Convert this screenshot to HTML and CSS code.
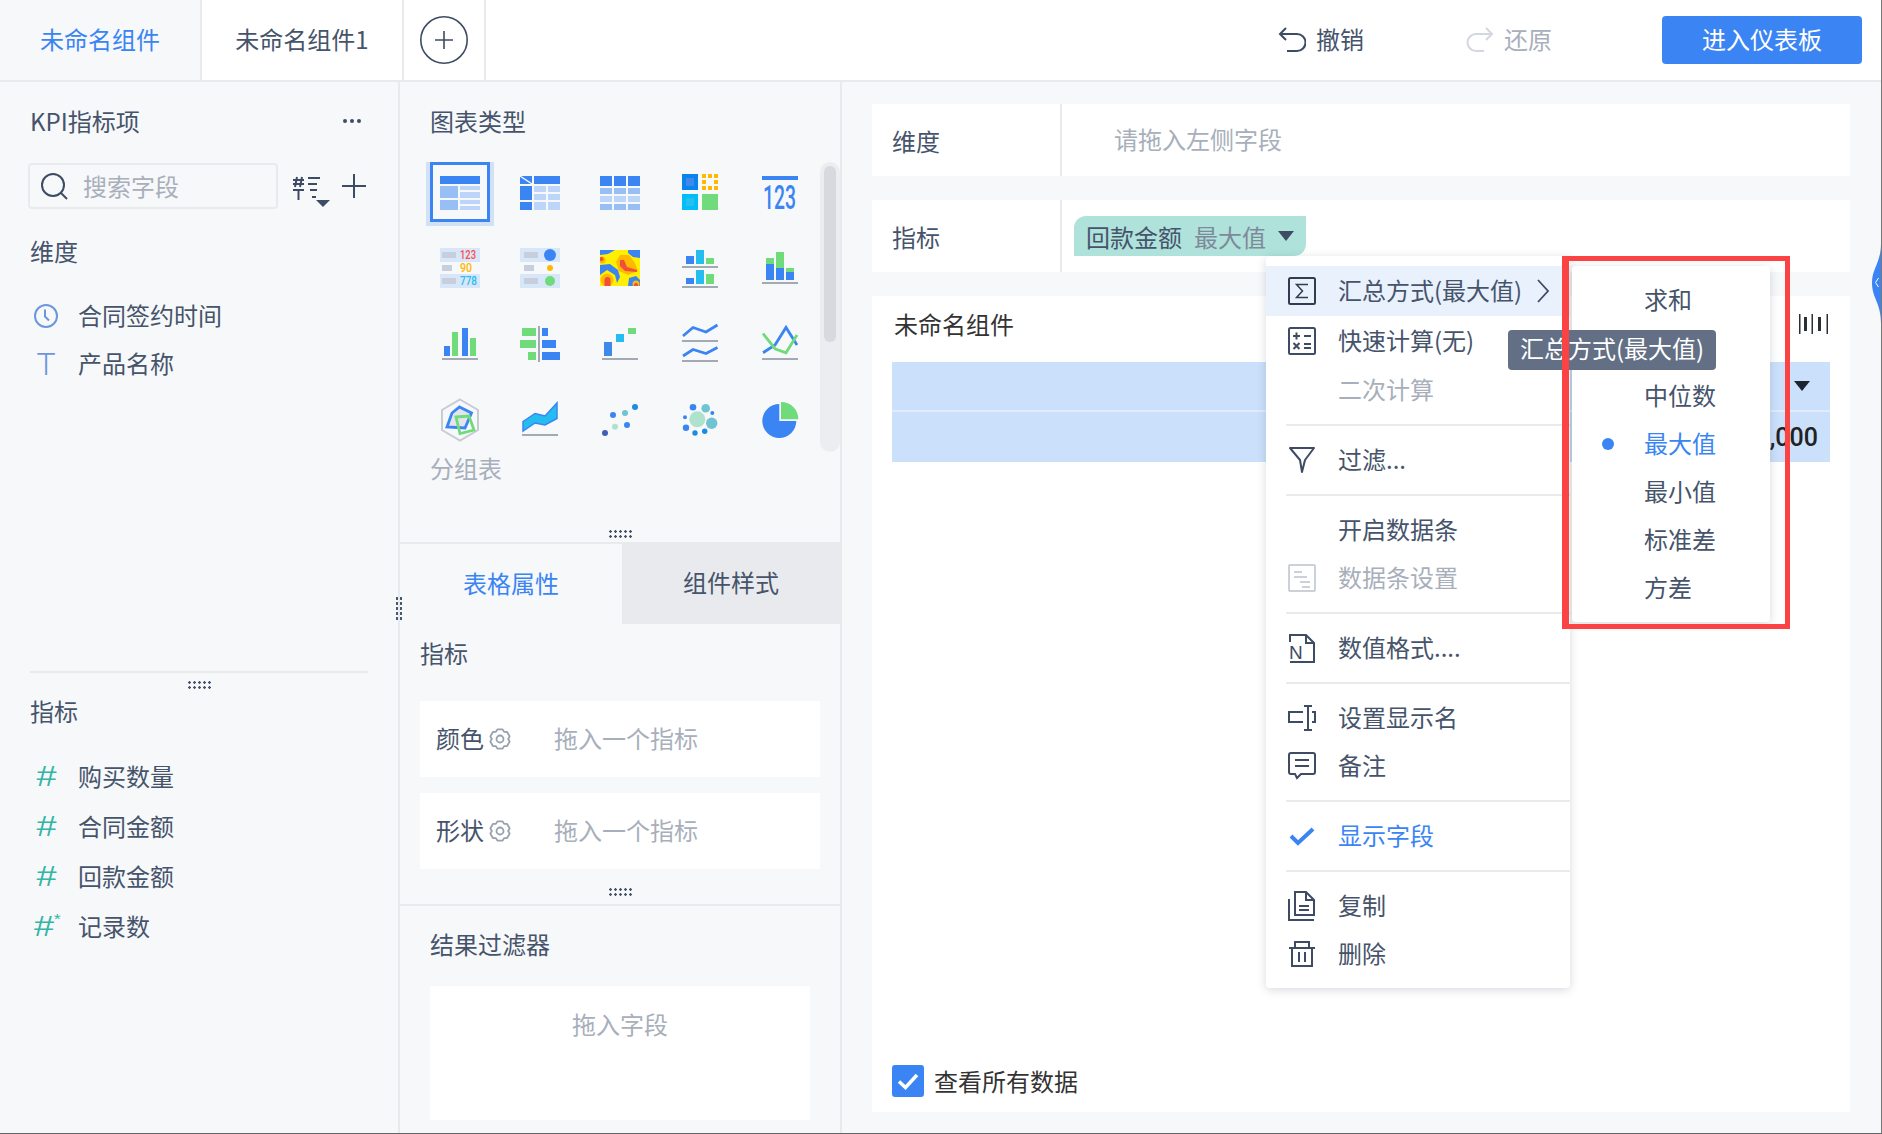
FILE: index.html
```html
<!DOCTYPE html>
<html lang="zh-CN">
<head>
    <meta charset="UTF-8">
    <title>未命名组件</title>
    <link rel="stylesheet" href="styles.css">
</head>
<body>
<div class="app">
    <header class="topbar">
        <div class="tab tab-active">未命名组件</div>
        <div class="tab">未命名组件1</div>
        <div class="tab-add">
            <svg width="48" height="48" viewBox="0 0 48 48" fill="none" stroke="#3d4b63"><circle cx="24" cy="24" r="23.2" stroke-width="1.6"/><path d="M24 15v18M15 24h18" stroke-width="1.6"/></svg>
        </div>
        <div class="top-actions">
            <div class="action">
                <svg width="28" height="26" viewBox="0 0 28 26" fill="none" stroke="#3d4b63" stroke-width="2"><path d="M8 1 2 7l6 6"/><path d="M2 7h17a7.5 7.5 0 0 1 0 17H9"/></svg>
                <span>撤销</span>
            </div>
            <div class="action action-off">
                <svg width="28" height="26" viewBox="0 0 28 26" fill="none" stroke="#d3d7de" stroke-width="2"><path d="M20 1l6 6-6 6"/><path d="M26 7H10a7.5 7.5 0 0 0 0 17h8"/></svg>
                <span>还原</span>
            </div>
            <button class="primary-btn">进入仪表板</button>
        </div>
    </header>

    <div class="workspace">
        <aside class="fields-panel">
            <div class="dim-block">
                <div class="panel-title">
                    <span>KPI指标项</span>
                    <svg class="more" width="20" height="6" viewBox="0 0 20 6" fill="#3d4b63"><circle cx="3" cy="3" r="2"/><circle cx="10" cy="3" r="2"/><circle cx="17" cy="3" r="2"/></svg>
                </div>
                <div class="search-row">
                    <div class="search-box">
                        <svg width="30" height="30" viewBox="0 0 30 30" fill="none" stroke="#3d4b63" stroke-width="2"><circle cx="14" cy="14" r="11"/><path d="M22 22l6 6"/></svg>
                        <span>搜索字段</span>
                    </div>
                    <svg class="sort-icon" width="40" height="34" viewBox="0 0 40 34" fill="none" stroke="#3d4b63" stroke-width="2">
                        <path d="M5 4 3 14M10 4 8 14M1 7h11M1 11h11M1 17h11M6.500 17v10M16 5h12M16 11h9M18 17h7M20 24h4"/>
                        <path d="M24 27h14l-7 7z" fill="#3d4b63" stroke="none"/>
                    </svg>
                    <svg class="plus-icon" width="24" height="24" viewBox="0 0 24 24" stroke="#3d4b63" stroke-width="2"><path d="M12 0v24M0 12h24"/></svg>
                </div>
                <div class="group-title">维度</div>
                <ul class="field-list dim-list">
                    <li>
                        <span class="field-icon"><svg width="28" height="28" viewBox="0 0 28 28" fill="none" stroke="#6d97dc" stroke-width="2"><circle cx="16" cy="14" r="11"/><path d="M15 7.500v7l4 4"/></svg></span>
                        <span class="field-name">合同签约时间</span>
                    </li>
                    <li>
                        <span class="field-icon type-t">T</span>
                        <span class="field-name">产品名称</span>
                    </li>
                </ul>
            </div>
            <div class="measure-block">
                <div class="grip grip-field"></div>
                <div class="group-title">指标</div>
                <ul class="field-list measure-list">
                    <li><span class="field-icon type-num">#</span><span class="field-name">购买数量</span></li>
                    <li><span class="field-icon type-num">#</span><span class="field-name">合同金额</span></li>
                    <li><span class="field-icon type-num">#</span><span class="field-name">回款金额</span></li>
                    <li><span class="field-icon type-num type-calc">#<sup>*</sup></span><span class="field-name">记录数</span></li>
                </ul>
            </div>
            <div class="grip-side"></div>
        </aside>

        <section class="config-panel">
            <div class="chart-section">
                <div class="panel-title">图表类型</div>
                <div class="chart-body">
                    <div class="chart-main">
                        <div class="chart-grid">
                            <svg class="chart-icon" viewBox="0 0 60 60">
                                <rect x="-4" width="68" height="64" fill="#d2e1f5"/>
                                <rect x="1.500" y="1.500" width="57" height="57" fill="#f7f8fa" stroke="#3a85f3" stroke-width="3"/>
                                <rect x="10" y="14" width="40" height="8" fill="#3a85f3"/>
                                <path d="M10 24h18v12H10zM10 38h18v10H10z" fill="#98bff5"/>
                                <path d="M30 24h20v4H30zM30 30h20v6H30zM30 38h20v4H30zM30 44h20v4H30z" fill="#bdd5f9"/>
                            </svg>
                            <svg class="chart-icon" viewBox="0 0 60 60">
                                <path d="M10 14h12v8H10zM24 14h26v8H24zM10 24h12v14H10zM10 40h12v8H10z" fill="#3a85f3"/>
                                <path d="M10 14l12 8" stroke="#f7f8fa" stroke-width="1.500"/>
                                <path d="M24 24h12v6H24zM38 24h12v6H38zM24 32h12v6H24zM38 32h12v6H38zM24 40h12v8H24zM38 40h12v8H38z" fill="#bdd5f9"/>
                            </svg>
                            <svg class="chart-icon" viewBox="0 0 60 60">
                                <path d="M10 14h12v10H10zM24 14h12v10H24zM38 14h12v10H38z" fill="#3a85f3"/>
                                <path d="M10 26h12v6H10zM24 26h12v6H24zM38 26h12v6H38zM10 42h12v6H10zM24 42h12v6H24zM38 42h12v6H38z" fill="#98bff5"/>
                                <path d="M10 34h12v6H10zM24 34h12v6H24zM38 34h12v6H38z" fill="#bdd5f9"/>
                            </svg>
                            <svg class="chart-icon" viewBox="0 0 60 60">
                                <rect x="12" y="12" width="16" height="16" fill="#0a84ec"/>
                                <rect x="16" y="16" width="8" height="8" fill="#3f8ae8"/>
                                <path d="M32 12h4v4h-4zM38 12h4v4h-4zM44 12h4v4h-4zM32 18h4v4h-4zM44 18h4v4h-4zM32 24h4v4h-4zM38 24h4v4h-4zM44 24h4v4h-4z" fill="#ffb900"/>
                                <rect x="12" y="32" width="16" height="16" fill="#00bdf7"/>
                                <rect x="16" y="36" width="8" height="8" fill="#26c0f0"/>
                                <rect x="32" y="32" width="16" height="16" fill="#6fdb7a"/>
                            </svg>
                            <svg class="chart-icon" viewBox="0 0 60 60">
                                <rect x="12" y="14" width="36" height="4" fill="#3a85f3"/>
                                <text class="num-glyph" x="13" y="47" font-size="33" textLength="33" lengthAdjust="spacingAndGlyphs" fill="#3a85f3">123</text>
                            </svg>

                            <svg class="chart-icon" viewBox="0 0 60 60">
                                <path d="M10 10h40v14H10zM10 36h40v14H10z" fill="#d8e6fa"/>
                                <path d="M12 14h14v6H12zM12 27h10v6H12zM12 40h14v6H12z" fill="#c8cfdc"/>
                                <text class="num-glyph" x="30" y="21" font-size="12" textLength="16" lengthAdjust="spacingAndGlyphs" fill="#ff4a4a">123</text>
                                <text class="num-glyph" x="30" y="34" font-size="12" textLength="12" lengthAdjust="spacingAndGlyphs" fill="#ffb900">90</text>
                                <text class="num-glyph" x="30" y="47" font-size="12" textLength="17" lengthAdjust="spacingAndGlyphs" fill="#27bdf0">778</text>
                            </svg>
                            <svg class="chart-icon" viewBox="0 0 60 60">
                                <path d="M10 10h40v14H10zM10 36h40v14H10z" fill="#d8e6fa"/>
                                <path d="M14 14h14v6H14zM14 27h10v6H14zM14 40h14v6H14z" fill="#c8cfdc"/>
                                <circle cx="40" cy="17" r="6" fill="#3a85f3"/>
                                <circle cx="40" cy="30" r="3" fill="#ffb900"/>
                                <circle cx="40" cy="43" r="5" fill="#6fdb7a"/>
                            </svg>
                            <svg class="chart-icon" viewBox="0 0 60 60">
                                <svg x="10" y="12" width="40" height="36" viewBox="10 12 40 36">
                                    <rect x="10" y="12" width="40" height="36" fill="#fff000"/>
                                    <path d="M10 12h15l-7 4-8 1zM38 12h12v8l-7-1-5-4zM10 27l10-1 8 6 2 7-3 6-2-8-8-5-7 5zM38 48l1-8 7-2 4 4v6z" fill="#3a85f3"/>
                                    <path d="M26 24l4-7 9 0 6 8 3 8-10 4-9-4z" fill="#ffb900"/>
                                    <path d="M30 22h4l3 7 10 3v2l-12-1-5-5z" fill="#f04f3a"/>
                                    <circle cx="17" cy="42" r="6.500" fill="#ffb900"/>
                                    <circle cx="12" cy="22" r="3.500" fill="#ffb900"/>
                                    <circle cx="46" cy="46" r="3.500" fill="#ffb900"/>
                                    <path d="M14.500 48v-6a3 3 0 0 1 6 0v6z" fill="#f04f3a"/>
                                    <circle cx="11.500" cy="21" r="2" fill="#f04f3a"/>
                                    <circle cx="46" cy="47" r="2" fill="#f04f3a"/>
                                </svg>
                            </svg>
                            <svg class="chart-icon" viewBox="0 0 60 60">
                                <path d="M12 28h36v2H12zM12 48h36v2H12z" fill="#a3aab6"/>
                                <path d="M16 18h8v8h-8zM16 40h8v6h-8z" fill="#3a85f3"/>
                                <path d="M26 12h8v14h-8zM26 32h8v14h-8z" fill="#25bdf0"/>
                                <path d="M36 20h8v6h-8zM36 36h8v10h-8z" fill="#6fdb7a"/>
                            </svg>
                            <svg class="chart-icon" viewBox="0 0 60 60">
                                <path d="M12 44h36v2H12z" fill="#a3aab6"/>
                                <path d="M16 26h8v16h-8zM26 30h8v12h-8zM36 34h8v8h-8z" fill="#3a85f3"/>
                                <path d="M16 20h8v6h-8zM26 14h8v16h-8zM36 30h8v4h-8z" fill="#6fdb7a"/>
                            </svg>

                            <svg class="chart-icon" viewBox="0 0 60 60">
                                <path d="M12 44h36v2H12z" fill="#a3aab6"/>
                                <path d="M14 32h6v10h-6zM32 14h6v28h-6z" fill="#3a85f3"/>
                                <path d="M22 18h6v24h-6zM40 24h6v18h-6z" fill="#6fdb7a"/>
                            </svg>
                            <svg class="chart-icon" viewBox="0 0 60 60">
                                <path d="M28 12h2v36h-2z" fill="#a3aab6"/>
                                <path d="M12 14h14v8H12zM10 26h16v8H10zM18 38h8v8h-8z" fill="#6fdb7a"/>
                                <path d="M32 14h6v8h-6zM32 26h14v8H32zM32 38h18v8H32z" fill="#3a85f3"/>
                            </svg>
                            <svg class="chart-icon" viewBox="0 0 60 60">
                                <path d="M12 44h36v2H12z" fill="#a3aab6"/>
                                <rect x="14" y="28" width="8" height="14" fill="#3f8ae8"/>
                                <rect x="26" y="20" width="8" height="8" fill="#25bdf0"/>
                                <rect x="38" y="14" width="8" height="6" fill="#6fdb7a"/>
                            </svg>
                            <svg class="chart-icon" viewBox="0 0 60 60" fill="none">
                                <path d="M12 27h36M12 47h36" stroke="#a3aab6" stroke-width="2"/>
                                <path d="M13 22l10-8.500 13 4.500 11.500-7M13 42l10-6.500 13 4 11.500-6" stroke="#3a85f3" stroke-width="2.800"/>
                            </svg>
                            <svg class="chart-icon" viewBox="0 0 60 60" fill="none">
                                <path d="M12 45h36" stroke="#a3aab6" stroke-width="2"/>
                                <path d="M13 38.700 25 31l11-17.500L47 31" stroke="#3a85f3" stroke-width="2.800"/>
                                <path d="M13 19.500 25 34.700l11 4L47 21" stroke="#6fdb7a" stroke-width="2.800"/>
                            </svg>

                            <svg class="chart-icon" viewBox="0 0 60 60" fill="none">
                                <path d="M30 9.500 48 20v20L30 50.500 12 40V20z" stroke="#c7ccd4" stroke-width="2"/>
                                <path d="M29.500 17 41.500 23 35 38l-18-1 5-14z" fill="#e3e5ea" stroke="#3a85f3" stroke-width="2.800"/>
                                <path d="M26 27l13-1 5 14-14 3.500z" stroke="#6fdb7a" stroke-width="2.800"/>
                            </svg>
                            <svg class="chart-icon" viewBox="0 0 60 60">
                                <path d="M12 44h36v2H12z" fill="#a3aab6"/>
                                <path d="M13 31.500 25 23.500l10 2.500L47 13v15.500L35 35l-10-2-12 8z" fill="#25bdf0" stroke="#3a85f3" stroke-width="1.500"/>
                            </svg>
                            <svg class="chart-icon" viewBox="0 0 60 60">
                                <circle cx="15" cy="43" r="3" fill="#3f5fb5"/>
                                <circle cx="25" cy="36.700" r="3" fill="#afe2cc"/>
                                <circle cx="23" cy="25" r="3" fill="#3a85f3"/>
                                <circle cx="35" cy="23" r="3" fill="#70c4d2"/>
                                <circle cx="37" cy="35" r="3" fill="#3a85f3"/>
                                <circle cx="45" cy="17" r="3" fill="#1b8ce0"/>
                            </svg>
                            <svg class="chart-icon" viewBox="0 0 60 60">
                                <circle cx="27.300" cy="29.300" r="8" fill="#aee2cd"/>
                                <circle cx="35.700" cy="18.300" r="4.300" fill="#70c4d2"/>
                                <circle cx="41.700" cy="33.300" r="5.700" fill="#70c4d2"/>
                                <circle cx="23" cy="17.300" r="3.300" fill="#3a85f3"/>
                                <circle cx="42.300" cy="23" r="2" fill="#3a85f3"/>
                                <circle cx="15" cy="27.300" r="2" fill="#3a85f3"/>
                                <circle cx="16" cy="37.700" r="3.200" fill="#3a85f3"/>
                                <circle cx="25" cy="43" r="2.700" fill="#1b8ce0"/>
                                <circle cx="34.700" cy="41.300" r="2.700" fill="#1b8ce0"/>
                            </svg>
                            <svg class="chart-icon" viewBox="0 0 60 60">
                                <path d="M29.300 14v17h17a17 17 0 1 1-17-17z" fill="#3a85f3"/>
                                <path d="M31 12a17 17 0 0 1 17.300 17.300H31z" fill="#6fdb7a"/>
                            </svg>
                        </div>
                        <div class="chart-name">分组表</div>
                    </div>
                    <div class="scroll-track"><div class="scroll-thumb"></div></div>
                </div>
                <div class="grip grip-chart"></div>
            </div>

            <div class="prop-tabs">
                <div class="prop-tab prop-tab-active">表格属性</div>
                <div class="prop-tab prop-tab-off">组件样式</div>
            </div>
            <div class="prop-title">指标</div>
            <div class="prop-row">
                <span class="prop-label">颜色</span>
                <svg class="gear" width="22" height="22" viewBox="0 0 22 22" fill="none" stroke="#97a0ae" stroke-width="1.800" stroke-linejoin="round"><path d="M20.660 13.590 18.070 18.070 15.100 18.100 13.590 20.660H8.410L6.900 18.100 3.930 18.070 1.340 13.590 2.800 11 1.340 8.410 3.930 3.930 6.900 3.900 8.410 1.340H13.590L15.100 3.900 18.070 3.930 20.660 8.410 19.200 11z"/><circle cx="11" cy="11" r="3.500"/></svg>
                <span class="placeholder">拖入一个指标</span>
            </div>
            <div class="prop-row">
                <span class="prop-label">形状</span>
                <svg class="gear" width="22" height="22" viewBox="0 0 22 22" fill="none" stroke="#97a0ae" stroke-width="1.800" stroke-linejoin="round"><path d="M20.660 13.590 18.070 18.070 15.100 18.100 13.590 20.660H8.410L6.900 18.100 3.930 18.070 1.340 13.590 2.800 11 1.340 8.410 3.930 3.930 6.900 3.900 8.410 1.340H13.590L15.100 3.900 18.070 3.930 20.660 8.410 19.200 11z"/><circle cx="11" cy="11" r="3.500"/></svg>
                <span class="placeholder">拖入一个指标</span>
            </div>
            <div class="grip grip-prop"></div>
            <div class="filter-section">
                <div class="panel-title filter-title">结果过滤器</div>
                <div class="filter-drop">拖入字段</div>
            </div>
        </section>

        <main class="canvas">
            <div class="shelf">
                <div class="shelf-label">维度</div>
                <div class="shelf-body"><span class="placeholder shelf-hint">请拖入左侧字段</span></div>
            </div>
            <div class="shelf">
                <div class="shelf-label">指标</div>
                <div class="shelf-body">
                    <div class="chip">
                        <span>回款金额</span>
                        <span class="chip-agg">最大值</span>
                        <i class="caret"></i>
                    </div>
                </div>
            </div>
            <div class="card">
                <div class="card-head">
                    <span>未命名组件</span>
                    <svg width="30" height="20" viewBox="0 0 30 20" fill="#2b2f36"><path d="M0 0h1.500v20H0zM5 3h3v14H5zM12.500 0H14v20h-1.500zM19 3h3v14h-3zM27.500 0H29v20h-1.500z"/></svg>
                </div>
                <div class="kpi-table">
                    <div class="kpi-head"><i class="caret caret-dark"></i></div>
                    <div class="kpi-row">,000</div>
                </div>
                <label class="check-all">
                    <svg width="32" height="32" viewBox="0 0 32 32"><rect width="32" height="32" rx="3" fill="#3a85f3"/><path d="M7 16.500l6.500 6L25 10" fill="none" stroke="#fff" stroke-width="3.500"/></svg>
                    查看所有数据
                </label>
            </div>
        </main>
    </div>

    <!-- field context menu -->
    <div class="menu">
        <div class="menu-item menu-item-tall menu-item-hover">
            <svg viewBox="0 0 28 28" fill="none" stroke="#2f3c52" stroke-width="2"><rect x="1" y="1" width="26" height="26" rx="1.500"/><path d="M20 7.500H8.500L14.500 14l-6 6.500H20" stroke-width="1.500"/></svg>
            <span>汇总方式(最大值)</span>
            <svg class="menu-arrow" viewBox="0 0 12 24" fill="none" stroke="#3d4b63" stroke-width="1.800"><path d="M1 1l10 11L1 23"/></svg>
        </div>
        <div class="menu-item menu-item-tall">
            <svg viewBox="0 0 28 28" fill="none" stroke="#3d4b63" stroke-width="2"><rect x="1" y="1" width="26" height="26" rx="1.500"/><path d="M5 9h7M8.500 5.500v7M16 9h7M5.500 16l6 6M11.500 16l-6 6M16 17h7M16 21h7"/></svg>
            <span>快速计算(无)</span>
        </div>
        <div class="menu-item menu-item-off"><span class="menu-blank"></span><span>二次计算</span></div>
        <div class="menu-sep"></div>
        <div class="menu-item">
            <svg viewBox="0 0 28 28" fill="none" stroke="#3d4b63" stroke-width="2"><path d="M2 2h24l-9 12-3 12-2-12z" stroke-linejoin="round"/></svg>
            <span>过滤...</span>
        </div>
        <div class="menu-sep"></div>
        <div class="menu-item"><span class="menu-blank"></span><span>开启数据条</span></div>
        <div class="menu-item menu-item-off">
            <svg viewBox="0 0 28 28" fill="none" stroke="#ccd0d8" stroke-width="2"><rect x="1" y="1" width="26" height="26" rx="1"/><path d="M6 8h8M6 13h13M12 18h10M14 23h8"/></svg>
            <span>数据条设置</span>
        </div>
        <div class="menu-sep"></div>
        <div class="menu-item">
            <svg class="menu-icon-tall" viewBox="0 0 28 30" fill="none" stroke="#3d4b63" stroke-width="2"><path d="M2 9V2h16l8 8v19H2"/><path d="M18 2v8h8"/><text class="doc-letter" x="1" y="26" font-size="19" fill="#3d4b63" stroke="none">N</text></svg>
            <span>数值格式....</span>
        </div>
        <div class="menu-sep"></div>
        <div class="menu-item">
            <svg viewBox="0 0 28 28" fill="none" stroke="#3d4b63" stroke-width="2"><path d="M15 8H1v10h14M24 8h3v10h-3M20 2v24M16 2h8M16 26h8"/></svg>
            <span>设置显示名</span>
        </div>
        <div class="menu-item">
            <svg viewBox="0 0 28 28" fill="none" stroke="#3d4b63" stroke-width="2"><path d="M3 1h22a2 2 0 0 1 2 2v17a2 2 0 0 1-2 2H13l-4 4-2-4H3a2 2 0 0 1-2-2V3a2 2 0 0 1 2-2z"/><path d="M7 8h14M7 14h14"/></svg>
            <span>备注</span>
        </div>
        <div class="menu-sep"></div>
        <div class="menu-item menu-item-on">
            <svg viewBox="0 0 28 28" fill="none" stroke="#3a85f3" stroke-width="4"><path d="M3 14l7 7L25 7"/></svg>
            <span>显示字段</span>
        </div>
        <div class="menu-sep"></div>
        <div class="menu-item">
            <svg class="menu-icon-tall" viewBox="0 0 28 30" fill="none" stroke="#3d4b63" stroke-width="2"><path d="M7 24V1h11l8 8v15z"/><path d="M18 1v8h8M1 8v21h25M11 15h10M11 19h10"/></svg>
            <span>复制</span>
        </div>
        <div class="menu-item">
            <svg viewBox="0 0 28 28" fill="none" stroke="#3d4b63" stroke-width="2"><path d="M1 8h26M7 8V2h14v6M4 8v18h20V8M11 12v10M17 12v10"/></svg>
            <span>删除</span>
        </div>
    </div>

    <!-- aggregation submenu -->
    <div class="submenu">
        <div class="sub-item">求和</div>
        <div class="sub-item"></div>
        <div class="sub-item">中位数</div>
        <div class="sub-item sub-item-on">最大值</div>
        <div class="sub-item">最小值</div>
        <div class="sub-item">标准差</div>
        <div class="sub-item">方差</div>
    </div>
    <div class="tooltip">汇总方式(最大值)</div>
    <div class="mark-box"></div>

    <svg class="side-handle" width="9" height="80" viewBox="0 0 9 80">
        <path d="M9 0C9 20 0 25 0 40s9 20 9 40z" fill="#3a85f3"/>
        <path d="M6.500 35 3.500 39.500l3 4.500" fill="none" stroke="#fff" stroke-width="1"/>
    </svg>
</div>
</body>
</html>
```

FILE: styles.css
```css
* {
    box-sizing: border-box;
}
html, body {
    margin: 0;
    padding: 0;
}
body {
    font-family: "Noto Sans CJK SC", sans-serif;
    font-size: 24px;
    color: #46546b;
    background-color: #f7f8fa;
}
ul {
    list-style: none;
    margin: 0;
    padding: 0;
}
svg {
    display: block;
    flex-shrink: 0;
}
.app {
    position: relative;
    width: 1882px;
    height: 1134px;
    display: flex;
    flex-direction: column;
    overflow: hidden;
    border-right: 1px solid #777;
    border-bottom: 1px solid #666;
}

/* top bar */
.topbar {
    height: 82px;
    flex-shrink: 0;
    display: flex;
    background-color: #fff;
    border-bottom: 2px solid #e9eaee;
}
.tab {
    width: 202px;
    padding-bottom: 4px;
    display: flex;
    align-items: center;
    justify-content: center;
    border-right: 2px solid #e9eaee;
}
.tab-active {
    color: #3a85f3;
    background-color: #f7f8fa;
}
.tab-add {
    width: 82px;
    display: flex;
    align-items: center;
    justify-content: center;
    border-right: 2px solid #e9eaee;
}
.top-actions {
    margin-left: auto;
    padding-right: 19px;
    display: flex;
    align-items: center;
}
.action {
    display: flex;
    align-items: center;
    gap: 10px;
    margin-right: 102px;
}
.action span {
    padding-bottom: 4px;
}
.action-off {
    color: #a8afbb;
    margin-right: 110px;
}
.primary-btn {
    width: 200px;
    height: 48px;
    padding: 0 0 4px;
    border: none;
    border-radius: 4px;
    font: inherit;
    color: #fff;
    background-color: #3a85f3;
}

/* panels */
.workspace {
    flex: 1;
    display: flex;
    min-height: 0;
}
.fields-panel {
    position: relative;
    width: 400px;
    padding: 0 30px;
    border-right: 2px solid #e9eaee;
}
.panel-title {
    padding: 15px 0 1px;
    line-height: 48px;
    display: flex;
    align-items: center;
    justify-content: space-between;
}
.more {
    margin-right: 6px;
}
.dim-block {
    height: 591px;
    border-bottom: 2px solid #e9eaee;
}
.search-row {
    display: flex;
    align-items: center;
    margin-top: 17px;
}
.search-box {
    width: 250px;
    height: 46px;
    margin-left: -2px;
    padding-left: 9px;
    display: flex;
    align-items: center;
    gap: 14px;
    color: #a8afbb;
    border: 2px solid #e9eaee;
    border-radius: 4px;
}
.search-box span {
    padding-bottom: 2px;
}
.sort-icon {
    margin: 8px 0 0 14px;
}
.plus-icon {
    margin: 0 0 0 10px;
}
.group-title {
    line-height: 48px;
}
.dim-block .group-title {
    margin-top: 18px;
}
.measure-block .group-title {
    margin-top: -3px;
}
.field-list li {
    height: 48px;
    display: flex;
    align-items: center;
}
.dim-list {
    margin-top: 17px;
}
.field-name {
    padding-bottom: 4px;
}
.measure-list .field-name {
    padding-bottom: 2px;
}
.field-icon {
    width: 32px;
    margin-right: 16px;
    flex-shrink: 0;
}
.type-t {
    font-family: Roboto, sans-serif;
    font-size: 32px;
    font-weight: 300;
    line-height: 32px;
    text-align: center;
    color: #6d97dc;
}
.grip {
    width: 25px;
    height: 10px;
    background: radial-gradient(circle, #46556d 1.1px, transparent 1.5px) 0 0 / 5px 5px;
}
.grip-field {
    margin: 7px auto 0;
}
.measure-list {
    margin-top: 16px;
}
.measure-list li {
    height: 50px;
}
.type-num {
    font-family: "Liberation Sans", sans-serif;
    font-size: 30px;
    font-style: italic;
    line-height: 30px;
    text-align: center;
    color: #34b5a5;
    transform: scaleX(1.2);
}
.type-calc {
    text-align: left;
    padding-left: 3px;
    white-space: nowrap;
    transform-origin: left center;
}
.type-calc sup {
    font-size: 15px;
    font-style: normal;
    line-height: 0;
    vertical-align: 12px;
}
.grip-side {
    position: absolute;
    left: 395px;
    top: 514px;
    width: 8px;
    height: 25px;
    background: radial-gradient(circle, #46556d 1.1px, transparent 1.5px) 0 0 / 4px 5px;
}
.config-panel {
    width: 442px;
    display: flex;
    flex-direction: column;
    border-right: 2px solid #e9eaee;
}
.chart-section {
    height: 462px;
    flex-shrink: 0;
    display: flex;
    flex-direction: column;
    border-bottom: 2px solid #e9eaee;
}
.chart-section .panel-title {
    padding-left: 30px;
}
.chart-body {
    display: flex;
    padding-left: 20px;
    margin-top: 16px;
}
.chart-main {
    width: 400px;
}
.chart-grid {
    display: grid;
    grid-template-columns: repeat(5, 80px);
    grid-auto-rows: 60px;
    row-gap: 16px;
    justify-items: center;
}
.chart-icon {
    width: 60px;
    height: 60px;
    overflow: visible;
}
.num-glyph {
    font-family: Roboto, sans-serif;
    font-weight: 500;
}
.chart-name {
    margin-top: 4px;
    padding-left: 10px;
    line-height: 28px;
    color: #a8afbb;
}
.scroll-track {
    width: 20px;
    height: 290px;
    padding: 4px;
    border-radius: 10px;
    background-color: #ecedf0;
}
.scroll-thumb {
    height: 176px;
    border-radius: 6px;
    background-color: #d8d9de;
}
.grip-chart {
    margin: auto auto 3px;
}
.prop-tabs {
    display: flex;
    height: 80px;
    flex-shrink: 0;
    text-align: center;
    line-height: 78px;
}
.prop-tab-active {
    width: 222px;
    color: #3a85f3;
}
.prop-tab-off {
    width: 218px;
    margin-top: -2px;
    height: 82px;
    line-height: 80px;
    background-color: #e9eaee;
}
.prop-title {
    margin-top: 5px;
    padding: 0 0 2px 20px;
    line-height: 48px;
}
.prop-row {
    height: 76px;
    margin: 22px 20px -6px;
    padding-left: 16px;
    display: flex;
    align-items: center;
    background-color: #fff;
}
.prop-row span {
    padding-bottom: 4px;
}
.prop-label {
    width: 48px;
}
.gear {
    margin-left: 5px;
}
.placeholder {
    color: #a8afbb;
}
.prop-row .placeholder {
    margin-left: 43px;
}
.grip-prop {
    margin: 24px auto 0;
}
.filter-section {
    flex: 1;
    margin-top: 7px;
    border-top: 2px solid #e9eaee;
}
.panel-title.filter-title {
    padding: 14px 0 1px 30px;
}
.filter-drop {
    width: 380px;
    height: 134px;
    margin: 17px 0 0 30px;
    padding-top: 19px;
    line-height: 38px;
    text-align: center;
    color: #a8afbb;
    background-color: #fff;
}

/* canvas */
.canvas {
    flex: 1;
    padding: 22px 31px 21px 30px;
    display: flex;
    flex-direction: column;
    gap: 24px;
}
.shelf {
    height: 72px;
    flex-shrink: 0;
    display: flex;
    background-color: #fff;
}
.shelf-label {
    width: 188px;
    padding-left: 20px;
    line-height: 74px;
}
.shelf-body {
    flex: 1;
    display: flex;
    align-items: center;
    padding-left: 12px;
    border-left: 2px solid #e9eaee;
}
.shelf-hint {
    margin: -4px 0 0 40px;
}
.chip {
    height: 40px;
    width: 232px;
    padding: 0 12px;
    display: flex;
    align-items: center;
    gap: 12px;
    background-color: #afe2db;
    border-radius: 12px 0 12px 0;
}
.chip-agg {
    color: #7e8a9a;
}
.caret {
    display: block;
    width: 0;
    height: 0;
    border-style: solid;
    border-width: 10px 8px 0;
    border-color: #3d4b63 transparent transparent;
}
.caret-dark {
    border-top-color: #1f2530;
}
.card {
    flex: 1;
    padding: 4px 20px 14px;
    display: flex;
    flex-direction: column;
    color: #333;
    background-color: #fff;
}
.card-head {
    display: flex;
    align-items: center;
    justify-content: space-between;
    line-height: 48px;
    padding-left: 2px;
}
.card-head svg {
    margin-right: 1px;
}
.kpi-table {
    margin-top: 14px;
    background-color: #e0ecfc;
}
.kpi-head {
    height: 48px;
    padding-right: 20px;
    display: flex;
    align-items: center;
    justify-content: flex-end;
    background-color: #cbe0fb;
}
.kpi-row {
    height: 50px;
    margin-top: 2px;
    padding-right: 12px;
    font-family: Roboto, sans-serif;
    font-size: 25px;
    font-weight: 500;
    line-height: 52px;
    text-align: right;
    color: #222;
    background-color: #cbe0fb;
}
.check-all {
    margin-top: auto;
    display: flex;
    align-items: center;
    gap: 10px;
}

/* overlays */
.menu {
    position: absolute;
    left: 1266px;
    top: 256px;
    width: 304px;
    height: 732px;
    padding: 10px 0;
    border-radius: 4px;
    background-color: #fff;
    box-shadow: 0 2px 10px rgba(40, 50, 70, 0.18);
}
.menu-item {
    height: 48px;
    padding-left: 22px;
    display: flex;
    align-items: center;
}
.menu-item > span {
    padding-bottom: 4px;
}
.menu-item > svg {
    width: 28px;
    height: 28px;
    margin-right: 22px;
}
.menu-item > .menu-icon-tall {
    height: 30px;
}
.menu-item-tall {
    height: 50px;
}
.menu-item-hover {
    background-color: #e9f1fd;
}
.menu-item-off {
    color: #a8afbb;
}
.menu-item-on {
    color: #3a85f3;
}
.menu-blank {
    width: 28px;
    margin-right: 22px;
}
.menu-item > .menu-arrow {
    width: 12px;
    height: 24px;
    margin: 0 0 0 15px;
}
.menu-sep {
    height: 2px;
    margin: 10px 0 10px 20px;
    background-color: #e9eaee;
}
.doc-letter {
    font-family: "Liberation Sans", sans-serif;
}
.submenu {
    position: absolute;
    left: 1572px;
    top: 266px;
    width: 198px;
    height: 356px;
    padding: 10px 0;
    border-radius: 4px;
    background-color: #fff;
    box-shadow: 0 2px 10px rgba(40, 50, 70, 0.18);
}
.sub-item {
    position: relative;
    height: 48px;
    padding-left: 72px;
    line-height: 46px;
}
.sub-item-on {
    color: #3a85f3;
}
.sub-item-on::before {
    content: "";
    position: absolute;
    left: 30px;
    top: 18px;
    width: 12px;
    height: 12px;
    border-radius: 50%;
    background-color: #3a85f3;
}
.tooltip {
    position: absolute;
    left: 1508px;
    top: 330px;
    width: 208px;
    height: 40px;
    padding-left: 12px;
    line-height: 36px;
    color: #fff;
    border-radius: 4px;
    background-color: #636f84;
}
.mark-box {
    position: absolute;
    left: 1562px;
    top: 256px;
    width: 228px;
    height: 373px;
    border: 5px solid #fb4343;
    border-left-width: 7px;
}
.side-handle {
    position: absolute;
    right: 0;
    top: 243px;
}
```
